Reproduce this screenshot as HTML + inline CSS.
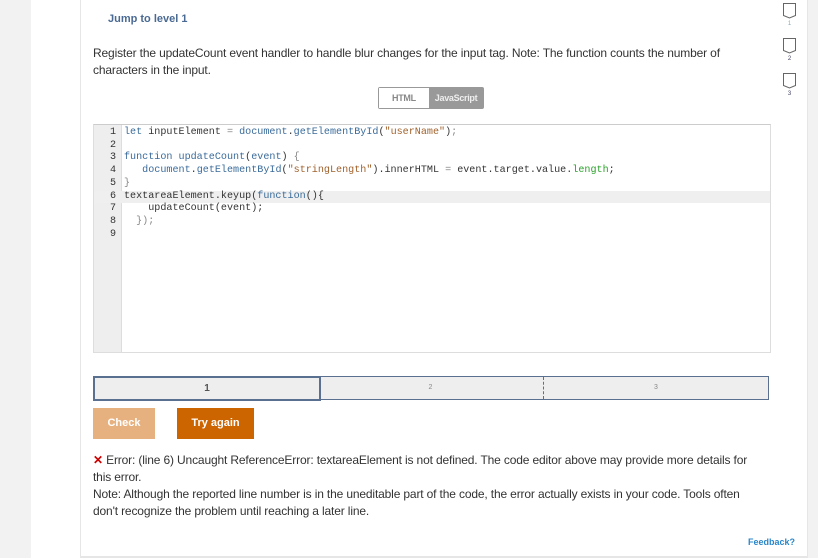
<!DOCTYPE html>
<html><head><meta charset="utf-8"><style>
body{margin:0;width:818px;height:558px;background:#f2f2f2;font-family:"Liberation Sans",Arial,sans-serif;position:relative;overflow:hidden}
.w{position:absolute;left:31px;top:0;width:777px;height:558px;background:#fff}
.card{position:absolute;left:80px;top:-2px;width:726px;height:558px;background:#fff;border-left:1px solid #e6e6e6;border-right:1px solid #e6e6e6;border-bottom:2px solid #e6e6e6}
.abs{position:absolute}
.jump{left:108px;top:13px;font-size:11px;font-weight:bold;color:#4a6a93}
.desc{left:93px;top:45px;width:660px;font-size:12px;line-height:17px;color:#333;letter-spacing:-0.15px}
.tog{left:378px;top:87px;height:20px;display:flex;border:1px solid #999;border-radius:2px;font-size:9px;font-weight:bold;letter-spacing:-0.3px}
.tog div{padding:0 6px;line-height:20px}
.ed{left:93px;top:124px;width:676px;height:227px;border:1px solid #ddd;border-top:1px solid #ccc;background:#fff}
.gut{position:absolute;left:0;top:0;width:27px;height:227px;background:#eee;border-right:1px solid #ddd}
.code{position:absolute;left:0;top:2px;font-family:"Liberation Mono",monospace;font-size:10.1px;line-height:12.7px;white-space:pre;width:676px;color:#333}
.ln{display:inline-block;width:22px;text-align:right;color:#333;margin-right:8px}
.hl{background:#efefef}
.k{color:#3a6b9a}.s{color:#a0622c}.p{color:#888}.g{color:#2aa02a}
.prog{left:93px;top:376px;width:674px;height:22px;background:#eee;border:1px solid #5a7090}
.seg1{position:absolute;left:-1px;top:-1px;width:224px;height:21px;border:2px solid #5a7090;text-align:center;font-size:10px;font-weight:bold;line-height:21px;color:#555}
.btn{top:408px;height:31px;line-height:31px;font-size:11px;font-weight:bold;color:#fff;text-align:center}
.err{left:93px;top:452px;width:660px;font-size:12px;line-height:17px;color:#333;letter-spacing:-0.15px}
</style></head><body>
<div class="w"></div>
<div class="card"></div>
<div class="abs jump">Jump to level 1</div>
<div class="abs desc">Register the updateCount event handler to handle blur changes for the input tag. Note: The function counts the number of characters in the input.</div>
<div class="abs tog"><div style="color:#888;background:#fff;padding:0 13px">HTML</div><div style="background:#999;color:#eee">JavaScript</div></div>
<div class="abs ed"><div class="gut"></div><div class="code"><div><span class="ln">1</span><span class="k">let</span> inputElement <span class="p">=</span> <span class="k">document</span>.<span class="k">getElementById</span>(<span class="s">"userName"</span>)<span class="p">;</span></div><div><span class="ln">2</span></div><div><span class="ln">3</span><span class="k">function updateCount</span>(<span class="k">event</span>) <span class="p">{</span></div><div><span class="ln">4</span>   <span class="k">document</span>.<span class="k">getElementById</span>(<span class="s">"stringLength"</span>).innerHTML <span class="p">=</span> event.target.value.<span class="g">length</span>;</div><div><span class="ln">5</span><span class="p">}</span></div><div class="hl"><span class="ln">6</span>textareaElement.keyup(<span class="k">function</span>(){</div><div><span class="ln">7</span>    updateCount(event);</div><div><span class="ln">8</span>  <span class="p">});</span></div><div><span class="ln">9</span></div></div></div>
<div class="abs prog"><div class="seg1">1</div><div class="abs" style="left:224px;width:225px;top:0;height:22px;border-right:1px dashed #5a7090;text-align:center;font-size:7px;line-height:22px;color:#888">2</div><div class="abs" style="left:450px;width:224px;top:0;text-align:center;font-size:7px;line-height:22px;color:#888">3</div></div>
<div class="abs btn" style="left:93px;width:62px;background:#e7b17f">Check</div>
<div class="abs btn" style="left:177px;width:77px;background:#cc6400">Try again</div>
<div class="abs err"><span style="color:#c00;font-weight:bold">✕</span> Error: (line 6) Uncaught ReferenceError: textareaElement is not defined. The code editor above may provide more details for this error.<br>Note: Although the reported line number is in the uneditable part of the code, the error actually exists in your code. Tools often don't recognize the problem until reaching a later line.</div>
<div class="abs" style="left:748px;top:537px;font-size:9px;font-weight:bold;color:#2a86c8">Feedback?</div>
<svg class="abs" style="left:782px;top:2px" width="16" height="100" fill="#fff" stroke="#666" stroke-width="1">
<path d="M1.5 1.5H13.5V13.5L7.5 16L1.5 13.5Z"/><path d="M1.5 36.5H13.5V48.5L7.5 51L1.5 48.5Z"/><path d="M1.5 71.5H13.5V83.5L7.5 86L1.5 83.5Z"/>
<text x="7.5" y="23" font-size="6" text-anchor="middle" fill="#8ab" stroke="none">1</text>
<text x="7.5" y="58" font-size="6" text-anchor="middle" fill="#446" stroke="none">2</text>
<text x="7.5" y="93" font-size="6" text-anchor="middle" fill="#446" stroke="none">3</text>
</svg>
</body></html>
